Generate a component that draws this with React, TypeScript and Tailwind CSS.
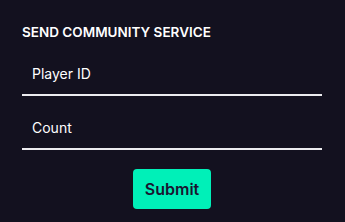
import { useState } from "react";

export default function App() {
  const [playerId, setPlayerId] = useState("");
  const [count, setCount] = useState("");

  return (
    <main className="w-[345px] h-[222px] bg-[#13111f] px-[22px] pt-[22px] font-['Inter',sans-serif] text-white">
      <h2 className="text-[13.5px] leading-5 font-semibold">SEND COMMUNITY SERVICE</h2>

      <div className="mt-[16px] flex flex-col gap-4">
        <input
          value={playerId}
          onChange={(e) => setPlayerId(e.target.value)}
          placeholder="Player ID"
          className="h-[38px] w-[300px] border-b-2 border-[#ececef] bg-transparent px-[10px] pb-[6px] text-[14px] outline-none placeholder:text-white"
        />
        <input
          value={count}
          onChange={(e) => setCount(e.target.value)}
          placeholder="Count"
          className="h-[38px] w-[300px] border-b-2 border-[#ececef] bg-transparent px-[10px] pb-[6px] text-[14px] outline-none placeholder:text-white"
        />
      </div>

      <div className="mt-[19px] flex w-[300px] justify-center">
        <button className="h-10 w-[78px] rounded-[4px] bg-[#00f0b8] text-[16px] font-semibold text-[#1a1530]">
          Submit
        </button>
      </div>
    </main>
  );
}
